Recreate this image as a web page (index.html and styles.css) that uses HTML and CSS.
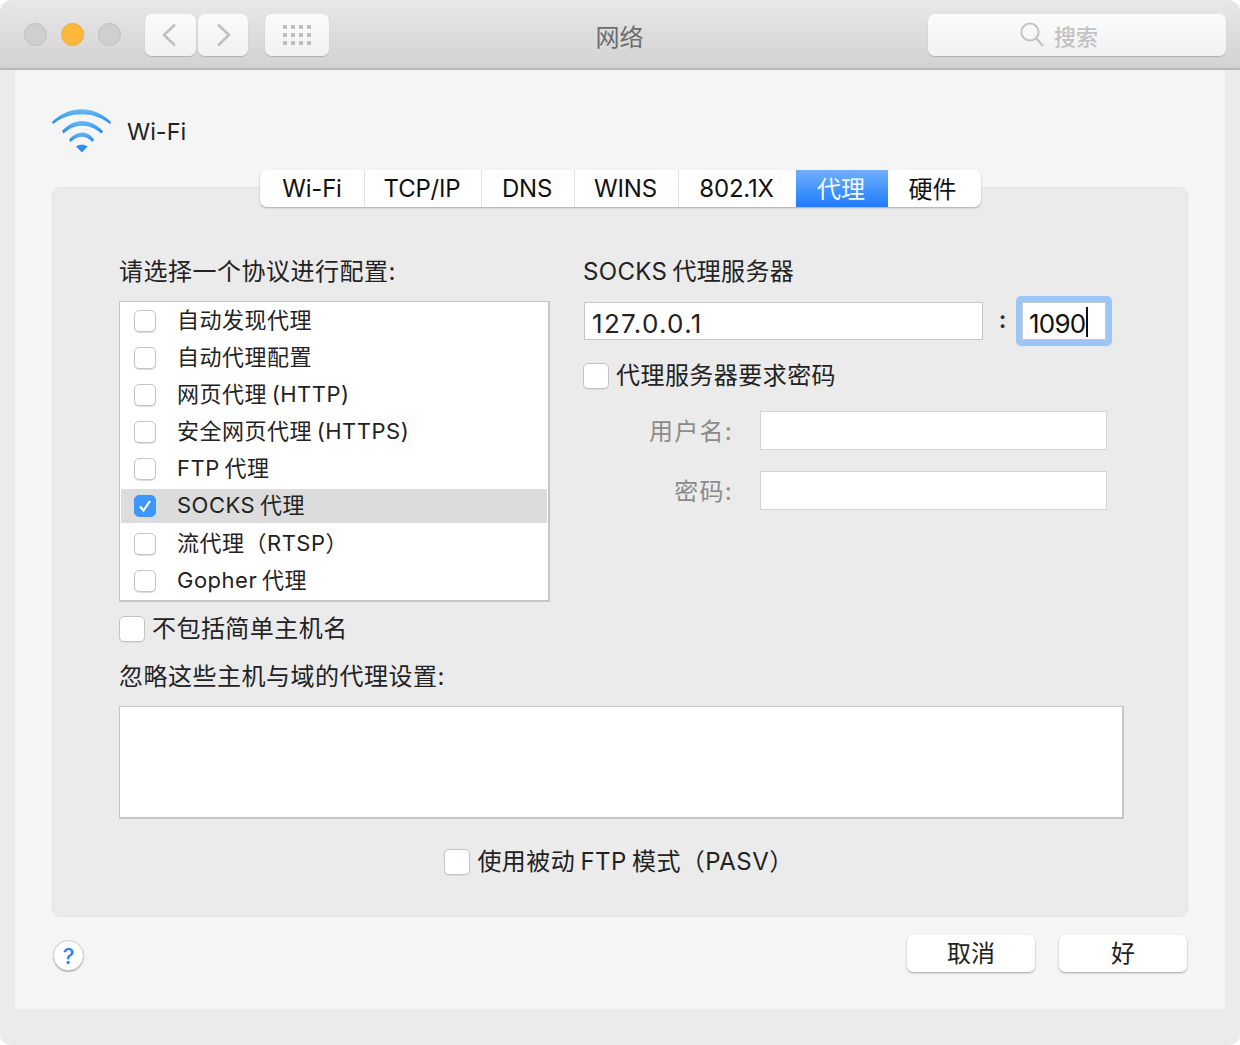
FILE: index.html
```html
<!DOCTYPE html>
<html lang="zh-CN">
<head>
<meta charset="utf-8">
<title>网络</title>
<link rel="stylesheet" href="styles.css">
</head>
<body>
<div class="window">
  <header class="titlebar">
    <div class="lights">
      <span class="light"></span>
      <span class="light light-min"></span>
      <span class="light"></span>
    </div>
    <div class="nav">
      <div class="tbtn tbtn-back">
        <svg width="16" height="24" viewBox="0 0 16 24"><path d="M14 1.500 3 12l11 10.500" fill="none" stroke="#c0c0c0" stroke-width="2.600"/></svg>
      </div>
      <div class="tbtn tbtn-fwd">
        <svg width="16" height="24" viewBox="0 0 16 24"><path d="M2 1.500 13 12 2 22.500" fill="none" stroke="#c0c0c0" stroke-width="2.600"/></svg>
      </div>
    </div>
    <div class="tbtn tbtn-grid">
      <svg width="28" height="20" viewBox="0 0 28 20" fill="#bdbdbd">
        <rect x="0" y="0" width="4" height="4"/><rect x="8" y="0" width="4" height="4"/><rect x="16" y="0" width="4" height="4"/><rect x="24" y="0" width="4" height="4"/>
        <rect x="0" y="8" width="4" height="4"/><rect x="8" y="8" width="4" height="4"/><rect x="16" y="8" width="4" height="4"/><rect x="24" y="8" width="4" height="4"/>
        <rect x="0" y="16" width="4" height="4"/><rect x="8" y="16" width="4" height="4"/><rect x="16" y="16" width="4" height="4"/><rect x="24" y="16" width="4" height="4"/>
      </svg>
    </div>
    <div class="wintitle">网络</div>
    <div class="search">
      <svg width="24" height="26" viewBox="0 0 24 26"><circle cx="10" cy="10" r="8.600" fill="none" stroke="#c4c4c4" stroke-width="2"/><path d="M16 16l7 8" stroke="#c4c4c4" stroke-width="2.400" fill="none"/></svg>
      <span>搜索</span>
    </div>
  </header>

  <main class="pane">
    <div class="devhead">
      <svg class="wifi" width="60" height="46" viewBox="0 0 60 46">
        <defs><linearGradient id="wf" x1="0" y1="0" x2="0" y2="1"><stop offset="0" stop-color="#6cbcf2"/><stop offset="1" stop-color="#1c86f2"/></linearGradient></defs>
        <path fill="url(#wf)" d="M0 14C17 -3 42 -3 59 14L58 16C42 3 17 3 1 16Z"/>
        <path fill="url(#wf)" d="M10 23C22 9.500 38 9.500 51 23L49.500 25.500C38 15 22 15 11.500 25.500Z"/>
        <path fill="url(#wf)" d="M17 31.500C25 22 36 22 42 31.500L40.500 34C34 27 26 27 18.500 34Z"/>
        <path fill="#2a8ff2" d="M24 38.500C27 36 33 36 35.500 38.500L30 44.500Z"/>
      </svg>
      <span class="devname">Wi-Fi</span>
    </div>

    <nav class="tabs">
      <div class="tab">Wi-Fi</div>
      <div class="tab">TCP/IP</div>
      <div class="tab">DNS</div>
      <div class="tab">WINS</div>
      <div class="tab">802.1X</div>
      <div class="tab tab-cjk tab-on">代理</div>
      <div class="tab tab-cjk tab-last">硬件</div>
    </nav>

    <section class="panel">
      <div class="cols">
        <div class="col-left">
          <div class="label">请选择一个协议进行配置:</div>
          <div class="list">
            <div class="row"><span class="cb"></span><span class="row-text">自动发现代理</span></div>
            <div class="row"><span class="cb"></span><span class="row-text">自动代理配置</span></div>
            <div class="row"><span class="cb"></span><span class="row-text">网页代理 (HTTP)</span></div>
            <div class="row"><span class="cb"></span><span class="row-text">安全网页代理 (HTTPS)</span></div>
            <div class="row"><span class="cb"></span><span class="row-text">FTP 代理</span></div>
            <div class="row row-on">
              <span class="cb cb-on"><svg width="16" height="16" viewBox="0 0 16 16"><path d="M3 8.500l3.500 4L13 3" fill="none" stroke="#fff" stroke-width="2.200"/></svg></span>
              <span class="row-text">SOCKS 代理</span>
            </div>
            <div class="row"><span class="cb"></span><span class="row-text">流代理（RTSP）</span></div>
            <div class="row"><span class="cb"></span><span class="row-text">Gopher 代理</span></div>
          </div>
          <div class="check check-simple"><span class="cb cb-lg"></span><span>不包括简单主机名</span></div>
        </div>

        <div class="col-right">
          <div class="label label-socks">SOCKS 代理服务器</div>
          <div class="server">
            <div class="field field-host">127.0.0.1</div>
            <span class="colon">:</span>
            <div class="focus-ring">
              <div class="field field-port">1090<i class="caret"></i></div>
            </div>
          </div>
          <div class="check check-pass"><span class="cb cb-lg"></span><span>代理服务器要求密码</span></div>
          <div class="cred">
            <span class="cred-label">用户名:</span>
            <div class="field field-cred"></div>
          </div>
          <div class="cred cred-second">
            <span class="cred-label">密码:</span>
            <div class="field field-cred"></div>
          </div>
        </div>
      </div>

      <div class="label label-bypass">忽略这些主机与域的代理设置:</div>
      <div class="field bypass"></div>
      <div class="check check-pasv"><span class="cb cb-lg"></span><span>使用被动 FTP 模式（PASV）</span></div>
    </section>

    <footer class="actions">
      <div class="help">?</div>
      <div class="btns">
        <div class="btn">取消</div>
        <div class="btn">好</div>
      </div>
    </footer>
  </main>
</div>
</body>
</html>
```

FILE: styles.css
```css
* { box-sizing: border-box; }

html, body {
  margin: 0;
  padding: 0;
  background: #fff;
}

body {
  font-family: Inter, "Noto Sans CJK SC", sans-serif;
  color: #222;
}

.window {
  width: 1240px;
  height: 1045px;
  background: #ebebeb;
  border-radius: 12px 12px 10px 10px;
  overflow: hidden;
}

/* title bar */
.titlebar {
  height: 70px;
  display: flex;
  align-items: flex-start;
  padding: 14px 14px 0 24px;
  background: linear-gradient(#e9e8e9, #d3d2d3);
  border-bottom: 2px solid #b8b8b8;
}

.lights {
  display: flex;
  gap: 14px;
  margin-top: 9px;
  width: 121px;
}

.light {
  width: 23px;
  height: 23px;
  border-radius: 50%;
  background: #cfcfcf;
  border: 1px solid #bfbfbf;
}

.light-min {
  background: #fdb83c;
  border-color: #ecab3a;
}

.nav {
  display: flex;
  gap: 2px;
}

.tbtn {
  height: 42px;
  display: flex;
  align-items: center;
  justify-content: center;
  border-radius: 7px;
  background: linear-gradient(#fbfbfb, #f1f1f1);
  box-shadow: 0 1px 1px #b0b0b0;
}

.tbtn-back {
  width: 51px;
  padding-right: 3px;
}

.tbtn-fwd {
  width: 50px;
  padding-left: 2px;
}

.tbtn-grid {
  width: 64px;
  margin-left: 17px;
}

.wintitle {
  flex: 1;
  text-align: center;
  font-size: 24px;
  line-height: 48px;
  color: #6c6c6c;
  padding-right: 18px;
}

.search {
  width: 298px;
  height: 42px;
  display: flex;
  align-items: center;
  justify-content: center;
  gap: 10px;
  padding-right: 36px;
  border-radius: 7px;
  background: linear-gradient(#fcfcfc, #f1f1f1);
  box-shadow: 0 1px 1px #b0b0b0;
  font-size: 22px;
  font-weight: 500;
  color: #c2c2c2;
}

/* pane */
.pane {
  margin: 0 15px;
  height: 939px;
  padding: 38px 37px 0;
  background: #f5f5f5;
}

.devhead {
  height: 46px;
  display: flex;
  align-items: center;
  gap: 15px;
}

.devname {
  font-size: 23.500px;
  line-height: 46px;
  margin-top: 2px;
}

/* tabs */
.tabs {
  position: relative;
  z-index: 1;
  width: 721px;
  height: 37px;
  margin: 16px 0 -20px 208px;
  display: grid;
  grid-template-columns: 104px 117px 93px 104px 118px 92px 93px;
  background: #fff;
  border-radius: 7px;
  box-shadow: 0 1px 2px #a8a8a8;
  overflow: hidden;
}

.tab {
  display: flex;
  align-items: center;
  justify-content: center;
  padding: 0 2px 1px 0;
  font-size: 24px;
  letter-spacing: -0.2px;
  color: #111;
  border-left: 1px solid #e2e2e2;
}

.tab:first-child {
  border-left: 0;
  padding-right: 0;
}

.tab-cjk {
  padding-bottom: 3px;
  letter-spacing: 0;
}

.tab-on {
  color: #f4f9ff;
  border-left: 0;
  background: linear-gradient(#6fb0fb, #1b7bfb);
}

.tab-on + .tab {
  border-left: 0;
}

.tab-last {
  padding-right: 4px;
}

/* panel */
.panel {
  height: 730px;
  padding: 69px 63px 0 66px;
  background: #ebebeb;
  border: 1px solid #e4e4e4;
  border-radius: 8px;
}

.cols {
  display: flex;
  gap: 33px;
}

.col-left {
  width: 431px;
}

.col-right {
  flex: 1;
}

.label {
  font-size: 24px;
  line-height: 30px;
  letter-spacing: 0.5px;
  word-spacing: -2px;
  margin-bottom: 14px;
}

.label-socks {
  letter-spacing: 0.35px;
}

.list {
  height: 301px;
  padding: 1.500px 1px 0;
  display: flex;
  flex-direction: column;
  gap: 3.200px;
  background: #fff;
  border: 2px solid #c6c6c6;
  border-width: 1px 2px 2px 1px;
}

.row {
  height: 34px;
  flex: none;
  display: flex;
  align-items: center;
  gap: 21px;
  padding-left: 13px;
  font-size: 22px;
  letter-spacing: 0.5px;
  word-spacing: -2px;
}

.row-text {
  padding-bottom: 6px;
}

.row-on {
  background: #dcdcdc;
}

.cb {
  width: 22px;
  height: 22px;
  flex: none;
  display: flex;
  align-items: center;
  justify-content: center;
  background: #fff;
  border: 1px solid #c4c4c4;
  border-radius: 5px;
  box-shadow: 0 1px 1px #dcdcdc;
}

.cb-on {
  background: #3f97fb;
  border-color: #3f97fb;
}

.cb-lg {
  width: 26px;
  height: 26px;
}

.check {
  display: flex;
  align-items: center;
  gap: 7px;
  font-size: 24px;
  line-height: 30px;
  letter-spacing: 0.45px;
}

.check-simple {
  margin-top: 12px;
}

.server {
  display: flex;
  align-items: center;
  margin-top: -5px;
  padding-left: 1px;
}

.field {
  background: #fff;
  border: 1px solid #c6c6c6;
  font-size: 26px;
}

.field-host {
  width: 399px;
  height: 38px;
  line-height: 42px;
  padding-left: 7px;
  letter-spacing: 1.300px;
}

.colon {
  width: 33px;
  padding-left: 6px;
  text-align: center;
  font-size: 24px;
  font-weight: 600;
  color: #333;
  line-height: 30px;
  margin-top: -2px;
}

.focus-ring {
  width: 96px;
  height: 50px;
  padding: 6px;
  background: #9cc6f3;
  border-radius: 5px;
}

.field-port {
  height: 38px;
  line-height: 42px;
  padding-left: 6px;
  color: #111;
  white-space: nowrap;
  letter-spacing: -0.8px;
  display: flex;
}

.caret {
  width: 2px;
  height: 30px;
  margin: 4px 0 0 1px;
  background: #111;
}

.check-pass {
  margin-top: 15px;
}

.cred {
  display: flex;
  align-items: center;
  margin-top: 20px;
}

.cred-second {
  margin-top: 21px;
}

.cred-label {
  width: 150px;
  padding-bottom: 3px;
  text-align: right;
  font-size: 24px;
  letter-spacing: 1.300px;
  color: #8b8b8b;
}

.field-cred {
  width: 347px;
  height: 39px;
  margin-left: 27px;
  border-color: #d4d4d4;
}

.label-bypass {
  margin-top: 18px;
  margin-bottom: 14px;
}

.bypass {
  width: 1005px;
  height: 113px;
  border: 2px solid #c6c6c6;
  border-width: 1px 2px 2px 1px;
}

.check-pasv {
  margin-top: 28px;
  justify-content: center;
  padding-right: 5px;
  word-spacing: -2px;
}

/* footer */
.actions {
  display: flex;
  justify-content: space-between;
  align-items: flex-start;
  margin-top: 18px;
}

.help {
  width: 31px;
  height: 31px;
  margin: 5px 0 0 1px;
  border-radius: 50%;
  background: #fff;
  border: 1px solid #cfcfcf;
  box-shadow: 0 1px 1px #b8b8b8;
  display: flex;
  align-items: center;
  justify-content: center;
  font-size: 22px;
  font-weight: 500;
  color: #1f82f7;
}

.btns {
  display: flex;
  gap: 24px;
  margin-right: 1px;
}

.btn {
  width: 128px;
  height: 37px;
  padding-bottom: 5px;
  display: flex;
  align-items: center;
  justify-content: center;
  background: #fff;
  border-radius: 6px;
  box-shadow: 0 1px 2px #a0a0a0;
  font-size: 24px;
  color: #222;
}
```
